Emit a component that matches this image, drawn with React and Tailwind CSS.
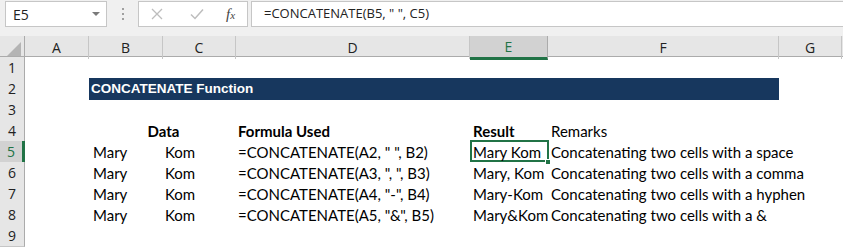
import React from "react";

const cols = ["A", "B", "C", "D", "E", "F", "G"];
const gridCols = "grid grid-cols-[25px_64px_74px_73px_234px_78px_231px_63px]";

const rows = [
  { n: 1 },
  { n: 2, title: true },
  { n: 3 },
  { n: 4, head: true },
  { n: 5, a: "Mary", b: "Kom", f: '=CONCATENATE(A2, " ", B2)', r: "Mary Kom", m: "Concatenating two cells with a space", sel: true },
  { n: 6, a: "Mary", b: "Kom", f: '=CONCATENATE(A3, ", ", B3)', r: "Mary, Kom", m: "Concatenating two cells with a comma" },
  { n: 7, a: "Mary", b: "Kom", f: '=CONCATENATE(A4, "-", B4)', r: "Mary-Kom", m: "Concatenating two cells with a hyphen" },
  { n: 8, a: "Mary", b: "Kom", f: '=CONCATENATE(A5, "&", B5)', r: "Mary&Kom", m: "Concatenating two cells with a &" },
  { n: 9 },
];

const cellFont = "font-['Lato','Liberation_Sans',sans-serif] text-[15px] text-black leading-none";

function Cell({ children, className = "" }) {
  return (
    <div className={`relative flex items-end pb-[3px] whitespace-nowrap overflow-visible ${cellFont} ${className}`}>
      {children}
    </div>
  );
}

export default function App() {
  return (
    <div className="w-[843px] h-[247px] overflow-hidden bg-white font-['Open_Sans','Liberation_Sans',sans-serif]">
      {/* formula bar */}
      <div className="h-[36px] bg-[#f0f0f0] pt-[1px] flex items-start">
        <div className="ml-[5px] w-[102px] h-[26px] bg-white border border-[#c6c6c6] flex items-center justify-between pl-[7px] pr-[6px]">
          <span className="text-[14px] text-[#222]">E5</span>
          <svg width="8" height="5" viewBox="0 0 8 5"><path d="M0 0h8L4 4z" fill="#7a7a7a" /></svg>
        </div>
        <div className="w-[31px] h-[26px] flex flex-col items-center justify-center gap-[3px]">
          <span className="w-[2px] h-[2px] bg-[#a0a0a0]" />
          <span className="w-[2px] h-[2px] bg-[#a0a0a0]" />
          <span className="w-[2px] h-[2px] bg-[#a0a0a0]" />
        </div>
        <div className="w-[110px] h-[26px] bg-white border border-[#c6c6c6] flex items-center pl-[12px]">
          <svg width="12" height="12" viewBox="0 0 12 12"><path d="M1 1l10 10M11 1L1 11" stroke="#bdbdbd" strokeWidth="1.3" /></svg>
          <svg className="ml-[27px]" width="14" height="12" viewBox="0 0 14 12"><path d="M1 6.5l4 4L13 1.5" stroke="#bdbdbd" strokeWidth="1.5" fill="none" /></svg>
          <span className="ml-[22px] font-['Liberation_Serif',serif] italic text-[15px] text-[#444] leading-none">f<span className="text-[11px]">x</span></span>
        </div>
        <div className="ml-[3px] flex-1 h-[26px] bg-white border border-r-0 border-[#c6c6c6] flex items-center pl-[12px]">
          <span className="text-[13px] text-[#222]">=CONCATENATE(B5, " ", C5)</span>
        </div>
      </div>

      {/* column headers */}
      <div className={`${gridCols} h-[21px] bg-[#e6e6e6] border-b border-[#ababab]`}>
        <div className="relative border-r border-[#ababab]">
          <svg className="absolute right-[3px] bottom-[3px]" width="14" height="14" viewBox="0 0 14 14"><path d="M14 0v14H0z" fill="#b4b4b4" /></svg>
        </div>
        {cols.map((c) => (
          <div
            key={c}
            className={`flex items-center justify-center text-[14px] ${
              c === "E"
                ? "bg-[#d2d2d2] text-[#217346] border-b-[3px] border-[#217346] -mb-[1px] border-r border-r-[#ababab]"
                : "text-[#222] border-r border-[#c6c6c6]"
            }`}
          >
            {c}
          </div>
        ))}
      </div>

      {/* rows */}
      {rows.map((row) => (
        <div key={row.n} className={`${gridCols} h-[21px]`}>
          <div
            className={`flex items-center justify-center text-[14px] border-b border-[#c6c6c6] ${
              row.sel
                ? "bg-[#d2d2d2] text-[#217346] border-r-[3px] border-r-[#217346]"
                : "bg-[#e6e6e6] text-[#222] border-r border-r-[#ababab]"
            }`}
          >
            {row.n}
          </div>
          {row.title ? (
            <>
              <div />
              <div className="col-span-6 bg-[#17375e] flex items-center pl-[2px] font-['Liberation_Sans',sans-serif] font-bold text-[13.5px] text-white whitespace-nowrap mr-[63px]">
                CONCATENATE Function
              </div>
            </>
          ) : row.head ? (
            <>
              <Cell />
              <Cell className="col-span-2 justify-center font-bold pl-[2px]">Data</Cell>
              <Cell className="pl-[2px] font-bold">Formula Used</Cell>
              <Cell className="pl-[3px] font-bold">Result</Cell>
              <Cell className="pl-[3px]">Remarks</Cell>
              <Cell />
            </>
          ) : row.a ? (
            <>
              <Cell />
              <Cell className="pl-[4px]">{row.a}</Cell>
              <Cell className="pl-[2px]">{row.b}</Cell>
              <Cell className="pl-[2px]">{row.f}</Cell>
              <Cell className="pl-[3px]">
                {row.sel && (
                  <>
                    <span className="absolute left-0 top-[-1px] w-[79px] h-[22px] border-2 border-[#217346]" />
                    <span className="absolute left-[75px] top-[18px] w-[6px] h-[6px] bg-[#217346] border border-white" />
                  </>
                )}
                <span className="relative">{row.r}</span>
              </Cell>
              <Cell className="pl-[3px]">{row.m}</Cell>
              <Cell />
            </>
          ) : (
            <div className="col-span-7" />
          )}
        </div>
      ))}
    </div>
  );
}
